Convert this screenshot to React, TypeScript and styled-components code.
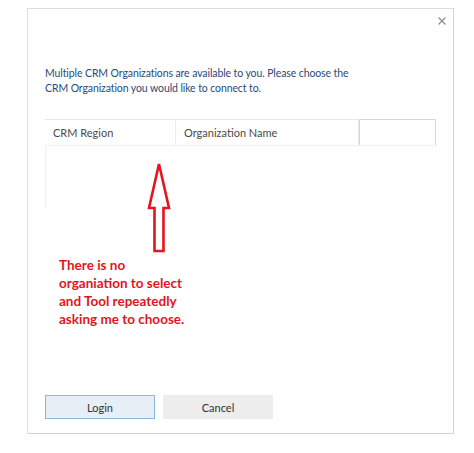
import styled, { createGlobalStyle } from "styled-components";

const GlobalStyle = createGlobalStyle`
  html, body {
    margin: 0;
    padding: 0;
    background: #ffffff;
  }
  body {
    font-family: Lato, "Noto Sans", sans-serif;
  }
`;

const Page = styled.div`
  width: 474px;
  height: 453px;
  padding: 8px 0 0 27px;
  box-sizing: border-box;
`;

const Dialog = styled.div`
  position: relative;
  width: 427px;
  height: 426px;
  box-sizing: border-box;
  border: 1px solid #dedede;
  border-right-color: #d4d4d4;
  border-bottom-color: #d4d4d4;
  padding: 57px 16px 0 17px;
  display: flex;
  flex-direction: column;
`;

const CloseButton = styled.div`
  position: absolute;
  top: 6px;
  right: 5px;
  width: 12px;
  height: 12px;
  display: flex;
  align-items: center;
  justify-content: center;
  cursor: pointer;
`;

const Message = styled.p`
  margin: 0;
  font-size: 10.5px;
  letter-spacing: -0.1px;
  line-height: 15px;
  color: #2b4a78;
`;

const Table = styled.div`
  margin-top: 23px;
  width: 391px;
  display: flex;
  flex-direction: column;
`;

const HeaderRow = styled.div`
  display: grid;
  grid-template-columns: 131px 183px 77px;
  height: 27px;
  border-top: 1px solid #e6e6e6;
  border-bottom: 1px solid #f0f0f0;
  box-sizing: border-box;
`;

const HeaderCell = styled.div<{ $boxed?: boolean }>`
  display: flex;
  align-items: center;
  padding-left: ${(p) => (p.$boxed ? "0" : "8px")};
  font-size: 11px;
  color: #4a4a4a;
  border-right: 1px solid ${(p) => (p.$boxed ? "#d6d6d6" : "#ececec")};
  border-left: ${(p) => (p.$boxed ? "1px solid #d6d6d6" : "none")};
  margin-top: ${(p) => (p.$boxed ? "-1px" : "0")};
  border-top: ${(p) => (p.$boxed ? "1px solid #d6d6d6" : "none")};
  box-sizing: border-box;
`;

const TableBody = styled.div`
  height: 62px;
  border-left: 1px solid #f0f0f0;
`;

const Annotation = styled.div`
  display: flex;
  flex-direction: column;
  align-items: flex-start;
  margin-top: -46px;
`;

const ArrowBox = styled.div`
  margin-left: 101px;
  width: 26px;
  height: 92px;
`;

const Note = styled.p`
  margin: 2px 0 0 14px;
  font-family: Lato, "Noto Sans", sans-serif;
  font-weight: 700;
  font-size: 13.5px;
  line-height: 18px;
  color: #e4141f;
`;

const ButtonRow = styled.div`
  margin-top: auto;
  margin-bottom: 14px;
  display: flex;
  gap: 8px;
`;

const Button = styled.button<{ $primary?: boolean }>`
  width: 110px;
  height: 24px;
  box-sizing: border-box;
  font-family: Lato, "Noto Sans", sans-serif;
  font-size: 11px;
  color: #333333;
  background: ${(p) => (p.$primary ? "#e6eef6" : "#ededed")};
  border: 1px solid ${(p) => (p.$primary ? "#8ab6e0" : "#ededed")};
  padding: 0;
  cursor: pointer;
`;

const CloseIcon = () => (
  <svg width="8" height="8" viewBox="0 0 8 8">
    <path d="M0.5 0.5 L7.5 7.5 M7.5 0.5 L0.5 7.5" stroke="#8a8a8a" strokeWidth="1.1" />
  </svg>
);

const HollowArrow = () => (
  <svg width="26" height="92" viewBox="0 0 26 92">
    <path
      d="M13 2 L23 46 L17.5 46 L17.5 89 L8.5 89 L8.5 46 L3 46 Z"
      fill="#ffffff"
      stroke="#e5141e"
      strokeWidth="2.6"
      strokeLinejoin="miter"
    />
  </svg>
);

export default function App() {
  return (
    <>
      <GlobalStyle />
      <Page>
        <Dialog>
          <CloseButton>
            <CloseIcon />
          </CloseButton>
          <Message>
            Multiple CRM Organizations are available to you. Please choose the
            <br />
            CRM Organization you would like to connect to.
          </Message>
          <Table>
            <HeaderRow>
              <HeaderCell>CRM Region</HeaderCell>
              <HeaderCell>Organization Name</HeaderCell>
              <HeaderCell $boxed />
            </HeaderRow>
            <TableBody />
          </Table>
          <Annotation>
            <ArrowBox>
              <HollowArrow />
            </ArrowBox>
            <Note>
              There is no
              <br />
              organiation to select
              <br />
              and Tool repeatedly
              <br />
              asking me to choose.
            </Note>
          </Annotation>
          <ButtonRow>
            <Button $primary>Login</Button>
            <Button>Cancel</Button>
          </ButtonRow>
        </Dialog>
      </Page>
    </>
  );
}
